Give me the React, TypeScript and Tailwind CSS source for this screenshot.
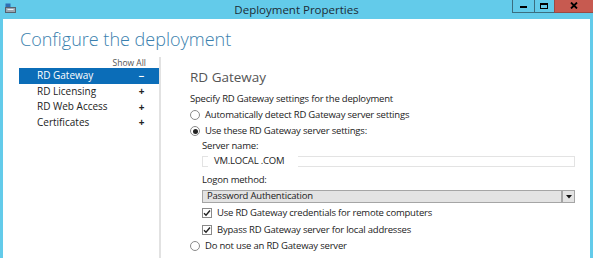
import React from "react";

const font = { fontFamily: '"Open Sans", "Noto Sans", Arial, sans-serif' };

function Radio({ checked }: { checked?: boolean }) {
  return (
    <span className="flex h-[10px] w-[10px] shrink-0 items-center justify-center rounded-full border border-[#8a8a8a] bg-white">
      {checked && <span className="h-[5px] w-[5px] rounded-full bg-[#222]" />}
    </span>
  );
}

function Check() {
  return (
    <span className="flex h-[10px] w-[10px] shrink-0 items-center justify-center border border-[#8a8a8a] bg-white">
      <svg width="8" height="8" viewBox="0 0 8 8">
        <path d="M1 4.2 L3 6.2 L7 1.5" fill="none" stroke="#222" strokeWidth="1.4" />
      </svg>
    </span>
  );
}

const nav = [
  { label: "RD Gateway", open: true },
  { label: "RD Licensing" },
  { label: "RD Web Access" },
  { label: "Certificates" },
];

export default function App() {
  return (
    <div className="flex h-[258px] w-[593px] flex-col bg-[#63cbea]" style={font}>
      {/* title bar */}
      <div className="flex h-[19px] shrink-0">
        <div className="w-[81px] shrink-0 pl-[5px] pt-[3px]">
          <svg width="12" height="10" viewBox="0 0 12 10">
            <rect x="0.5" y="0.5" width="5" height="4" fill="#2f6fb5" />
            <rect x="0.5" y="4.5" width="10" height="5" fill="#9aa7b3" stroke="#56626e" strokeWidth="1" />
            <rect x="2.5" y="6" width="6" height="1" fill="#e8eef3" />
          </svg>
        </div>
        <div className="flex-1 pt-[2px] text-center text-[11.5px] leading-[15px] text-[#1c2b36]">
          Deployment Properties
        </div>
        <div className="h-[13px] w-[22px] shrink-0 border-b border-l border-[#3b6e80] pt-[6px] pl-[7px]">
          <div className="h-[2px] w-[7px] bg-black" />
        </div>
        <div className="h-[13px] w-[20px] shrink-0 border-b border-l border-[#3b6e80] pt-[3px] pl-[5px]">
          <div className="h-[6px] w-[8px] border border-t-2 border-black" />
        </div>
        <div className="h-[13px] w-[39px] shrink-0 border-b border-l border-[#9b4a44] bg-[#c75a50] pl-[15px] pt-[2px]">
          <svg width="8" height="7" viewBox="0 0 8 7">
            <path d="M1 0.5 L7 6.5 M7 0.5 L1 6.5" stroke="#000" strokeWidth="1.8" />
          </svg>
        </div>
      </div>

      {/* client area */}
      <div className="mx-[3px] flex-1 bg-white">
        <div className="pl-[17px] pt-[7px] text-[18px] font-light leading-[26px] text-[#3a7fae]">
          Configure the deployment
        </div>

        <div className="mt-[5px] flex">
          {/* sidebar */}
          <div className="ml-[16px] w-[140px] text-[10px] text-[#222]">
            <div className="h-[11px] pr-[13px] text-right text-[8.5px] leading-[11px] text-[#555]">Show All</div>
            {nav.map((n) => (
              <div
                key={n.label}
                className={
                  "flex h-[15.5px] items-center pl-[18px] pr-[13px] " +
                  (n.open ? "bg-[#0b6db8] text-white" : "")
                }
              >
                <span className="flex-1">{n.label}</span>
                <span className="w-[9px] text-center font-bold leading-none">{n.open ? "−" : "+"}</span>
              </div>
            ))}
          </div>

          <div className="h-[210px] w-[2px] bg-[#e2e2e2]" />

          {/* page */}
          <div className="flex-1 pl-[29px] pr-[15px] text-[9.5px] tracking-[-0.2px] text-[#222]">
            <div className="mt-[12px] h-[16px] text-[13.5px] leading-[16px] tracking-normal text-[#555]">RD Gateway</div>
            <div className="mt-[6px] flex h-[16px] items-center">Specify RD Gateway settings for the deployment</div>
            <div className="flex h-[16px] items-center gap-[5px]">
              <Radio />
              <span>Automatically detect RD Gateway server settings</span>
            </div>
            <div className="flex h-[16px] items-center gap-[5px]">
              <Radio checked />
              <span>Use these RD Gateway server settings:</span>
            </div>

            <div className="pl-[12px]">
              <div className="flex h-[14px] items-center">Server name:</div>
              <div className="mt-[3px] flex h-[11px] items-center border border-[#e3e3e3]">
                <span className="-my-px ml-[5px] flex h-[11px] w-[90px] items-center bg-white pl-[6px]">
                  VM.LOCAL .COM
                </span>
              </div>
              <div className="mt-[5px] flex h-[16px] items-center">Logon method:</div>
              <div className="mt-[2px] flex h-[13px] items-center border border-[#a5a5a5] bg-[#e3e3e3]">
                <span className="flex-1 pl-[4px]">Password Authentication</span>
                <span className="flex h-full w-[13px] items-center justify-center border-l-2 border-[#a5a5a5]">
                  <svg width="6" height="4" viewBox="0 0 6 4">
                    <path d="M0 0 H6 L3 3.5 Z" fill="#111" />
                  </svg>
                </span>
              </div>
              <div className="mt-[2px] flex h-[16px] items-center gap-[5px]">
                <Check />
                <span>Use RD Gateway credentials for remote computers</span>
              </div>
              <div className="mt-[1px] flex h-[16px] items-center gap-[5px]">
                <Check />
                <span>Bypass RD Gateway server for local addresses</span>
              </div>
            </div>

            <div className="flex h-[16px] items-center gap-[5px]">
              <Radio />
              <span>Do not use an RD Gateway server</span>
            </div>
          </div>
        </div>
      </div>
    </div>
  );
}
